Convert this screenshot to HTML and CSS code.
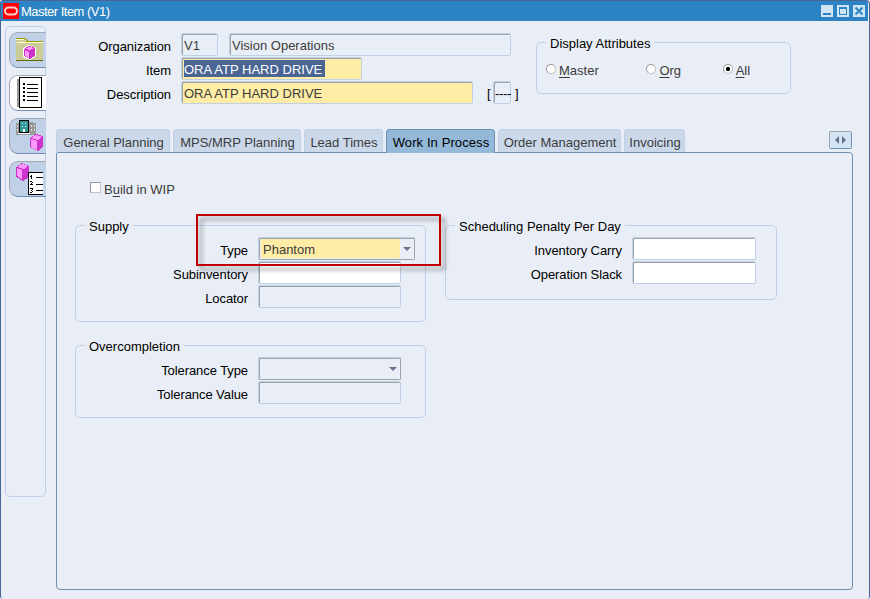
FILE: index.html
```html
<!DOCTYPE html>
<html lang="en">
<head>
    <meta charset="UTF-8">
    <title>Master Item (V1)</title>
    <link rel="stylesheet" href="styles.css">
</head>
<body>
    <div class="window">
        <header class="titlebar">
            <svg class="logo" width="16" height="16" viewBox="0 0 16 16">
                <rect width="16" height="16" fill="#f00"/>
                <rect x="2" y="4.5" width="12" height="7" rx="3.5" fill="none" stroke="#fcc" stroke-width="2"/>
            </svg>
            <h1>Master Item (V1)</h1>
            <div class="window-buttons">
                <svg width="12" height="12" viewBox="0 0 12 12"><path d="M2 9h8" stroke="#2c84c4" stroke-width="2"/></svg>
                <svg width="12" height="12" viewBox="0 0 12 12" shape-rendering="crispEdges"><path d="M2 2h8v8H2zM3 4v5h6V4z" fill="#2c84c4" fill-rule="evenodd"/></svg>
                <svg width="12" height="12" viewBox="0 0 12 12"><path d="M2.5 2.5l7 7M9.5 2.5l-7 7" stroke="#2c84c4" stroke-width="2"/></svg>
            </div>
        </header>

        <div class="content">
            <nav class="rail">
                <div class="rail-btn">
                    <svg width="36" height="35" viewBox="0 0 36 35" shape-rendering="crispEdges">
                        <path d="M7 6h9l3 3h15v20H7z" fill="#cc9"/>
                        <path d="M7 6h9v1H7zM16 7h2v1h-2zM18 8h1v1h-1zM17 9h17v1H17z" fill="#990"/>
                        <path d="M7 7h8v1H7zM8 10h26v1H8z" fill="#ffc"/>
                        <path d="M7 28h27v1H7z" fill="#660"/>
                        <path d="M14 16l6-3 7 3v8l-6 4-7-3z" fill="#fff"/>
                        <path d="M15 17l5-3 6 2v8l-5 3-6-3z" fill="#c3c"/>
                        <path d="M16 17l4-2 5 1-4 2z" fill="#f9f"/>
                        <path d="M16 18l4 2v6l-4-2z" fill="#f9f"/>
                    </svg>
                </div>
                <div class="rail-btn current">
                    <svg width="36" height="35" viewBox="0 0 36 35" shape-rendering="crispEdges">
                        <path d="M8 4h2v28H8z" fill="#999"/>
                        <path d="M10 2h23v31H10z" fill="#000"/>
                        <path d="M11 3h21v29H11z" fill="#fff"/>
                        <path d="M14 8h2v2h-2zm0 4h2v2h-2zm0 4h2v2h-2zm0 4h2v2h-2zm0 4h2v2h-2zM18 9h11v1H18zm0 4h11v1H18zm0 4h11v1H18zm0 4h11v1H18zm0 4h11v1H18z" fill="#000"/>
                    </svg>
                </div>
                <div class="rail-btn">
                    <svg width="36" height="35" viewBox="0 0 36 35" shape-rendering="crispEdges">
                        <path d="M7 5h4V4h13v1h3v12H7z" fill="#999"/>
                        <path d="M8 7h1v2H8zm0 4h1v2H8zM22 7h1v2h-1zm3 0h1v2h-1zm-3 4h1v2h-1zm3 0h1v2h-1z" fill="#ddd"/>
                        <path d="M10 2h10v13H10z" fill="#000"/>
                        <path d="M11 3h8v11h-8z" fill="#399"/>
                        <path d="M13 5h1v1h-1zm3 0h1v1h-1zm-3 3h1v1h-1zm3 0h1v1h-1z" fill="#cff"/>
                        <path d="M14 11h2v3h-2zM9 15h12v1H9z" fill="#fff"/>
                        <path d="M21 20l6-4 7 2v11l-5 4-8-4z" fill="#c3c"/>
                        <path d="M22 20l5-3 6 2-4 3z" fill="#f9f"/>
                        <path d="M22 21l6 2v9l-6-3z" fill="#f9f"/>
                        <path d="M29 23l5-3v9l-5 4z" fill="#c3c"/>
                    </svg>
                </div>
                <div class="rail-btn">
                    <svg width="36" height="35" viewBox="0 0 36 35" shape-rendering="crispEdges">
                        <path d="M7 6l6-4 7 3v11l-6 4-7-4z" fill="#c3c"/>
                        <path d="M8 6l5-3 6 2-4 3z" fill="#f9f"/>
                        <path d="M8 7l5 2v9l-5-3z" fill="#f9f"/>
                        <path d="M14 9l5-3v9l-5 4z" fill="#c3c"/>
                        <path d="M19 11h15v23H19z" fill="#000"/>
                        <path d="M20 12h14v21H20z" fill="#fff"/>
                        <path d="M22 14h1v4h-1zm-1 1h1v1h-1zM21 20h2v1h-2zm2 1h1v1h-1zm-1 1h1v1h-1zm-1 1h3v1h-3zM21 27h3v1h-3zm2 1h1v1h-1zm-1 1h1v1h-1zm1 1h1v1h-1zm-2 1h2v1h-2zM27 16h7v1h-7zm0 7h7v1h-7zm0 6h7v1h-7z" fill="#000"/>
                    </svg>
                </div>
            </nav>

            <main class="main">
                <section class="item-header">
                    <div class="item-fields">
                        <div class="row">
                            <span class="label">Organization</span>
                            <div class="field org-code">V1</div>
                            <div class="field org-name">Vision Operations</div>
                        </div>
                        <div class="row">
                            <span class="label">Item</span>
                            <div class="field required item"><span class="selected">ORA ATP HARD DRIVE</span></div>
                        </div>
                        <div class="row">
                            <span class="label">Description</span>
                            <div class="field required description">ORA ATP HARD DRIVE</div>
                            <div class="flex-field"><span>[</span><div class="field flex-box">----</div><span>]</span></div>
                        </div>
                    </div>
                    <fieldset class="group attributes">
                        <legend>Display Attributes</legend>
                        <label class="radio"><input type="radio" name="attr"><span><u>M</u>aster</span></label>
                        <label class="radio"><input type="radio" name="attr"><span><u>O</u>rg</span></label>
                        <label class="radio"><input type="radio" name="attr" checked><span><u>A</u>ll</span></label>
                    </fieldset>
                </section>

                <div class="tabbar">
                    <div class="tabs">
                        <div class="tab">General Planning</div>
                        <div class="tab">MPS/MRP Planning</div>
                        <div class="tab">Lead Times</div>
                        <div class="tab active">Work In Process</div>
                        <div class="tab">Order Management</div>
                        <div class="tab">Invoicing</div>
                    </div>
                    <div class="tab-scroll">
                        <svg width="11" height="8" viewBox="0 0 11 8"><path d="M4 0v8L0 4zM7 0v8l4-4z" fill="#687088"/></svg>
                    </div>
                </div>

                <section class="panel">
                    <label class="check"><input type="checkbox"><span>B<u>u</u>ild in WIP</span></label>
                    <div class="columns">
                        <div class="column">
                            <fieldset class="group supply">
                                <legend>Supply</legend>
                                <div class="row">
                                    <span class="label">Type</span>
                                    <div class="field select type"><span class="value">Phantom</span><i class="arrow"></i></div>
                                </div>
                                <div class="row">
                                    <span class="label">Subinventory</span>
                                    <div class="field editable"></div>
                                </div>
                                <div class="row">
                                    <span class="label">Locator</span>
                                    <div class="field"></div>
                                </div>
                                <div class="callout"></div>
                            </fieldset>
                            <fieldset class="group overcompletion">
                                <legend>Overcompletion</legend>
                                <div class="row">
                                    <span class="label">Tolerance Type</span>
                                    <div class="field select"><span class="value"></span><i class="arrow"></i></div>
                                </div>
                                <div class="row">
                                    <span class="label">Tolerance Value</span>
                                    <div class="field"></div>
                                </div>
                            </fieldset>
                        </div>
                        <fieldset class="group penalty">
                            <legend>Scheduling Penalty Per Day</legend>
                            <div class="row">
                                <span class="label">Inventory Carry</span>
                                <div class="field editable"></div>
                            </div>
                            <div class="row">
                                <span class="label">Operation Slack</span>
                                <div class="field editable"></div>
                            </div>
                        </fieldset>
                    </div>
                </section>
            </main>
        </div>
    </div>
</body>
</html>
```
FILE: styles.css
```css
:root {
    --bg: #e9eef6;
    --title: #2c84c4;
    --navy: #4a6594;
    --line: #bfd0e6;
    --gray: #9ea4aa;
    --tab: #cbd8ea;
    --tab-active: #94b8d8;
    --panel-line: #6f90b2;
    --required: #ffeca5;
}

* {
    box-sizing: border-box;
    margin: 0;
    padding: 0;
}

body {
    height: 599px;
    overflow: hidden;
    background: #fff;
    font-family: "Liberation Sans", Arial, sans-serif;
    font-size: 13px;
    line-height: 15px;
    color: #000;
    white-space: nowrap;
}

svg {
    display: block;
}

.window {
    height: 599px;
    background: var(--bg);
    border: 1px solid var(--navy);
    border-bottom: 0;
    border-radius: 3px 4px 3px 3px;
    overflow: hidden;
}

.titlebar {
    display: flex;
    align-items: center;
    height: 20px;
    margin-right: 1px;
    padding: 0 3px 0 2px;
    background: var(--title);
}

.titlebar h1 {
    flex: 1;
    margin: 1px 0 0 2px;
    font-size: 13px;
    font-weight: normal;
    color: #fff;
    letter-spacing: -0.52px;
}

.window-buttons {
    display: flex;
    gap: 4px;
}

.window-buttons svg {
    background: #cfe5f6;
}

.content {
    display: flex;
    gap: 10px;
    padding: 5px 16px 0 4px;
}

/* left toolbar */
.rail {
    display: flex;
    flex-direction: column;
    gap: 7px;
    width: 41px;
    height: 471px;
    padding: 5px 0 0 3px;
    border: 1px solid var(--line);
    border-radius: 5px;
}

.rail-btn {
    width: 37px;
    height: 36px;
    margin-right: -1px;
    background: #c0d0e6;
    border: 1px solid #a2a8b2;
    border-right: 0;
    border-bottom-color: var(--panel-line);
    border-radius: 9px 0 0 9px;
}

.rail-btn svg {
    margin: -1px 0 0 -1px;
}

.rail-btn.current {
    background: #fff;
}

.main {
    flex: 1;
}

.item-header {
    display: flex;
    height: 103px;
    padding-top: 7px;
}

.item-fields {
    width: 480px;
}

.row {
    display: flex;
    height: 24px;
}

.label {
    width: 115px;
    margin-right: 10px;
    padding-top: 6px;
    text-align: right;
    letter-spacing: -0.08px;
}

.field {
    height: 23px;
    padding: 4px 2px 0;
    border: 1px solid var(--line);
    border-radius: 2px;
    box-shadow: inset 1px 1px var(--gray);
    color: #3c3c3c;
}

.required {
    background: var(--required);
}

.editable {
    background: #fff;
}

.org-code {
    width: 37px;
    margin-right: 11px;
}

.org-name {
    width: 282px;
}

.item {
    width: 181px;
}

.description {
    width: 292px;
}

.selected {
    display: block;
    width: 141px;
    height: 17px;
    margin-top: -2px;
    padding-top: 2px;
    background: var(--navy);
    color: #fff;
}

.flex-field {
    display: flex;
    margin-left: 14px;
}

.flex-field span {
    width: 6px;
    padding-top: 5px;
}

.flex-box {
    width: 18px;
    margin-right: 4px;
    padding: 4px 0 0 1px;
    color: #000;
    letter-spacing: -0.3px;
}

.group {
    border: 1px solid var(--line);
    border-radius: 5px;
}

.group legend {
    height: 15px;
    margin-left: 9px;
    padding: 0 4px;
    line-height: 17px;
}

.attributes {
    width: 255px;
    height: 59px;
    margin-top: 2px;
}

.radio {
    display: inline-flex;
    align-items: center;
    margin: 11px 0 0 9px;
}

.radio:nth-of-type(2) {
    margin-left: 44px;
}

.radio:nth-of-type(3) {
    margin-left: 38px;
}

.radio input {
    appearance: none;
    width: 10px;
    height: 10px;
    margin: -1px 3px 0 0;
    background: #fff;
    border: 1px solid #999;
    border-right-color: #bbb;
    border-bottom-color: #bbb;
    border-radius: 50%;
}

.radio input:checked {
    background: radial-gradient(circle, #000 1.8px, #fff 2.4px);
}

.radio span {
    padding-top: 2px;
}

.radio span,
.check span {
    color: #3c3c3c;
}

u {
    text-underline-offset: 2px;
}

.tabbar {
    display: flex;
    justify-content: space-between;
}

.tabs {
    display: grid;
    grid-template-columns: 114px 128px 79px 109px 123px 61px;
    gap: 3px;
}

.tab {
    height: 23px;
    padding: 5px 0 0 1px;
    background: var(--tab);
    border: 1px solid var(--line);
    border-bottom: 0;
    border-radius: 4px 4px 0 0;
    color: #3c3c3c;
    display: flex;
    justify-content: center;
}

.tab.active {
    height: 24px;
    margin-bottom: -1px;
    background: var(--tab-active);
    border-color: var(--panel-line);
    color: #000;
    letter-spacing: 0.1px;
    z-index: 1;
}

.tab-scroll {
    display: flex;
    align-items: center;
    justify-content: center;
    width: 23px;
    height: 18px;
    margin: 2px 1px 0 0;
    background: #d3e4f5;
    border: 1px solid var(--gray);
    border-right-color: var(--panel-line);
    border-bottom-color: var(--panel-line);
    border-radius: 2px;
}

.panel {
    height: 438px;
    padding: 28px 0 0 18px;
    border: 1px solid var(--panel-line);
    border-radius: 2px 4px 4px 4px;
}

.check {
    display: flex;
    height: 37px;
    padding-left: 15px;
}

.check input {
    appearance: none;
    width: 11px;
    height: 11px;
    margin: 1px 3px 0 0;
    background: #fff;
    border: 1px solid #999;
    border-right-color: #c4c4c4;
    border-bottom-color: #c4c4c4;
}

.check span {
    padding-top: 1px;
}

.columns {
    display: flex;
    align-items: flex-start;
    gap: 19px;
}

.column {
    display: flex;
    flex-direction: column;
    gap: 16px;
    width: 351px;
}

.group .row:first-of-type {
    margin-top: 4px;
}

.group .label {
    width: 172px;
}

.group .field {
    width: 143px;
}

.supply {
    position: relative;
    height: 104px;
}

.overcompletion {
    height: 80px;
}

.penalty {
    width: 332px;
    height: 82px;
}

.penalty .label {
    width: 176px;
}

.penalty .field {
    width: 124px;
}

.select {
    display: flex;
    padding: 1px 1px 1px 2px;
    border-color: var(--line) var(--gray) var(--gray) var(--line);
}

.group .type {
    width: 157px;
}

.select .value {
    flex: 1;
    padding: 3px 0 0 2px;
}

.type .value {
    background: var(--required);
}

.arrow {
    width: 8px;
    height: 4px;
    margin: 8px 2px 0 3px;
    background: #6a6f8c;
    clip-path: polygon(0 0, 100% 0, 50% 100%);
}

/* highlight drawn over the Type field */
.callout {
    position: absolute;
    left: 120px;
    top: -19px;
    width: 245px;
    height: 52px;
    border: 2px solid #c00000;
    filter: drop-shadow(4px 4px 2px rgba(0, 0, 0, 0.4));
}
```
